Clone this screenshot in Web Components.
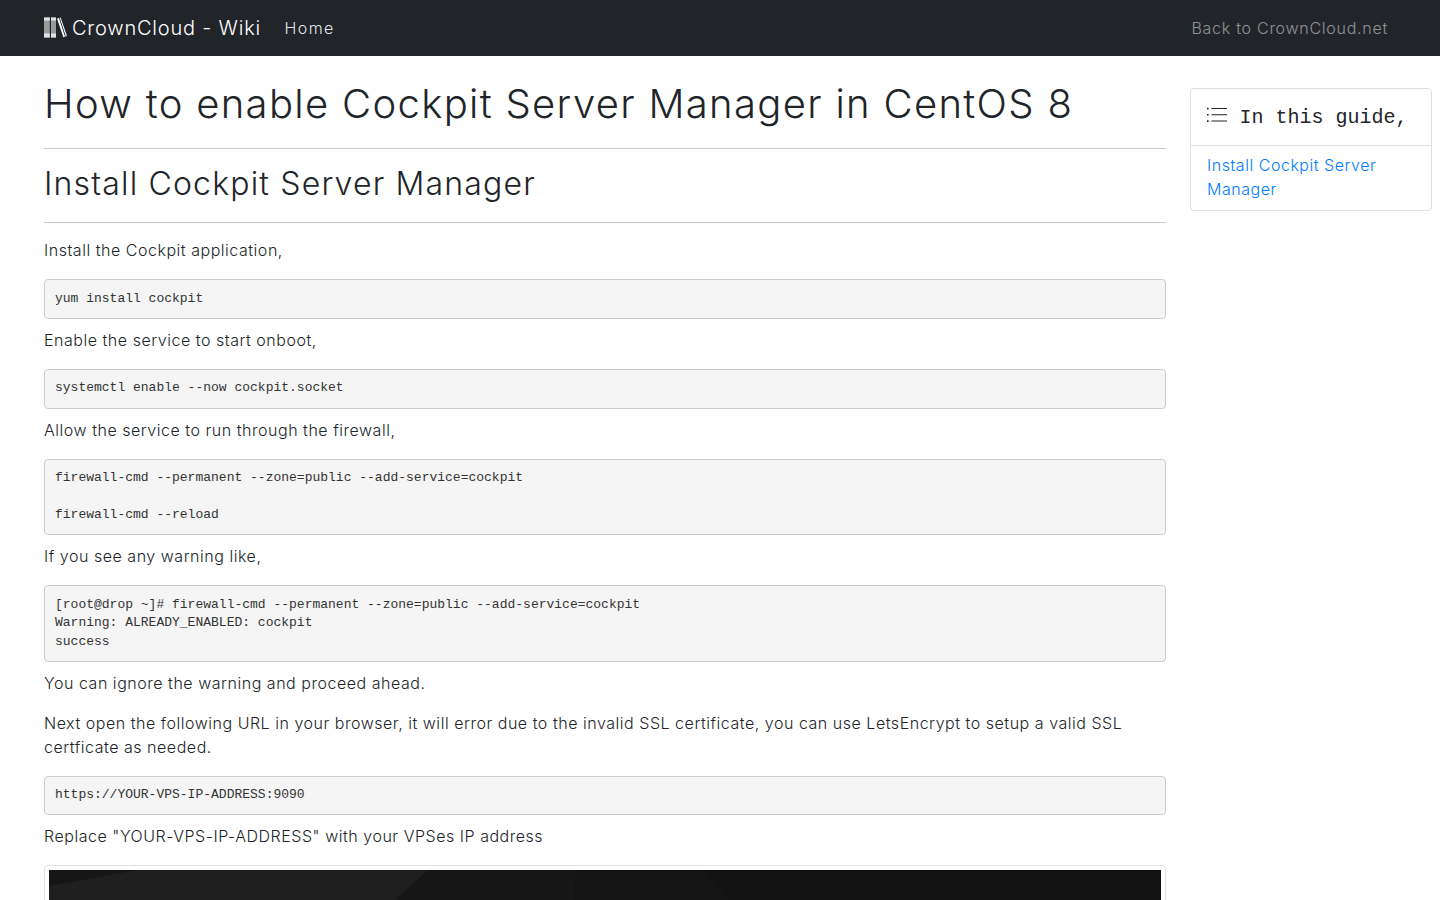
<!DOCTYPE html>
<html lang="en">
<head>
<meta charset="utf-8">
<title>How to enable Cockpit Server Manager in CentOS 8</title>
<style>
  html, body { margin: 0; background: #fff; }
  body {
    font-family: Inter, "Liberation Sans", sans-serif;
    font-size: 16px;
    line-height: 24px;
    color: #212529;
  }
</style>
</head>
<body>
<cc-navbar></cc-navbar>
<cc-page>
  <cc-title level="1">How to enable Cockpit Server Manager in CentOS 8</cc-title>
  <cc-title level="2">Install Cockpit Server Manager</cc-title>
  <cc-para>Install the Cockpit application,</cc-para>
  <cc-code>yum install cockpit</cc-code>
  <cc-para>Enable the service to start onboot,</cc-para>
  <cc-code>systemctl enable --now cockpit.socket</cc-code>
  <cc-para>Allow the service to run through the firewall,</cc-para>
  <cc-code>firewall-cmd --permanent --zone=public --add-service=cockpit

firewall-cmd --reload</cc-code>
  <cc-para>If you see any warning like,</cc-para>
  <cc-code>[root@drop ~]# firewall-cmd --permanent --zone=public --add-service=cockpit
Warning: ALREADY_ENABLED: cockpit
success</cc-code>
  <cc-para>You can ignore the warning and proceed ahead.</cc-para>
  <cc-para>Next open the following URL in your browser, it will error due to the invalid SSL certificate, you can use LetsEncrypt to setup a valid SSL certficate as needed.</cc-para>
  <cc-code>https://YOUR-VPS-IP-ADDRESS:9090</cc-code>
  <cc-para>Replace "YOUR-VPS-IP-ADDRESS" with your VPSes IP address</cc-para>
  <cc-shot></cc-shot>
  <cc-toc slot="aside">
    <a href="#install">Install Cockpit Server Manager</a>
  </cc-toc>
</cc-page>

<script>
class BaseElement extends HTMLElement {
  constructor(html) {
    super();
    const template = document.createElement('template');
    template.innerHTML = html;
    this.attachShadow({ mode: 'open' });
    this.shadowRoot.appendChild(template.content.cloneNode(true));
  }
}

class CcNavbar extends BaseElement {
  constructor() {
    super(`
      <style>
        :host { display: block; }
        nav {
          display: flex;
          align-items: center;
          height: 56px;
          padding: 0 52px 0 44px;
          background: #212529;
        }
        a { text-decoration: none; font-weight: 300; }
        .brand {
          display: flex;
          align-items: center;
          gap: 5px;
          color: #fff;
          font-size: 20px;
          letter-spacing: 0.04em;
        }
        svg { width: 23px; height: 21px; display: block; margin-top: -1px; }
        .home { margin: 0 0 1px 23.5px; color: rgba(255,255,255,.9); letter-spacing: 0.09em; }
        .back { margin: 0 0 1px auto; color: rgba(255,255,255,.5); letter-spacing: 0.046em; }
      </style>
      <nav>
        <a class="brand" href="#">
          <svg viewBox="0 0 23 21">
            <path fill="#9b9b9b" d="M0 .5h5.8v20H0zM7 .5h5v20H7z"/>
            <path fill="#e2e2e2" d="M0 .5h5.8v3H0zM7 .5h5v3H7zM0 16.5h5.8v4H0zM7 16.5h5v4H7z"/>
            <path fill="#fff" d="M13 1.6L16.6.5 23 19 19.3 20.2z"/>
            <path fill="#212529" d="M14.9.9l.8-.2 6.1 18.6-.8.3z"/>
          </svg>
          CrownCloud - Wiki
        </a>
        <a class="home" href="#">Home</a>
        <a class="back" href="#">Back to CrownCloud.net</a>
      </nav>
    `);
  }
}

class CcPage extends BaseElement {
  constructor() {
    super(`
      <style>
        :host {
          display: grid;
          grid-template-columns: minmax(0, 1fr) 242px;
          column-gap: 24px;
          padding: 24px 8px 0 44px;
          font-weight: 350;
          letter-spacing: 0.033em;
        }
        aside { padding-top: 8px; }
      </style>
      <main><slot></slot></main>
      <aside><slot name="aside"></slot></aside>
    `);
  }
}

class CcTitle extends BaseElement {
  constructor() {
    super(`
      <style>
        :host { display: block; }
        .t { font-weight: 350; line-height: 1.2; margin: 0; }
        .l1 { font-size: 40px; padding-bottom: 20px; letter-spacing: 0.033em; }
        .l2 { font-size: 32px; padding: 16px 0 19px; letter-spacing: 0.037em; }
        hr { border: 0; border-top: 1px solid #ccc; margin: 0; }
        :host([level="2"]) hr { margin-bottom: 16px; }
      </style>
      <div class="t" role="heading"><slot></slot></div>
      <hr>
    `);
    this.shadowRoot.querySelector('.t').classList.add('l' + this.getAttribute('level'));
  }
}

class CcPara extends BaseElement {
  constructor() {
    super(`
      <style>
        /* Inter sits a pixel lower in the line box than the original font */
        :host { display: block; margin: -1px 0 17px; }
      </style>
      <slot></slot>
    `);
  }
}

class CcCode extends BaseElement {
  constructor() {
    super(`
      <style>
        :host { display: block; margin-bottom: 10px; }
        pre {
          margin: 0;
          padding: 9.5px 10px;
          font: 13px/1.42857 "Liberation Mono", monospace;
          letter-spacing: 0;
          color: #333;
          background: #f5f5f5;
          border: 1px solid #ccc;
          border-radius: 4px;
          white-space: pre;
        }
      </style>
      <pre><slot></slot></pre>
    `);
  }
}

class CcShot extends BaseElement {
  constructor() {
    super(`
      <style>
        :host {
          display: block;
          padding: 4px;
          border: 1px solid #dee2e6;
          border-radius: 4px;
        }
        svg { display: block; width: 100%; height: 626px; }
      </style>
      <svg viewBox="0 0 1112 626" preserveAspectRatio="none">
        <rect width="1112" height="626" fill="#121212"/>
        <polygon points="0,0 379,0 -300,626 0,626" fill="#1f1f1f"/>
        <polygon points="0,0 88,0 0,16" fill="#161616"/>
        <polygon points="379,0 528,0 460,626 -300,626" fill="#171717"/>
        <polygon points="528,0 654,0 1217,626 460,626" fill="#141414"/>
      </svg>
    `);
  }
}

class CcToc extends BaseElement {
  constructor() {
    super(`
      <style>
        :host {
          display: block;
          border: 1px solid rgba(0,0,0,.125);
          border-radius: 4px;
        }
        header {
          display: flex;
          align-items: center;
          gap: 12.5px;
          height: 56px;
          padding: 0 16px;
          border-bottom: 1px solid rgba(0,0,0,.125);
          font: 20px/24px "Liberation Mono", monospace;
          letter-spacing: 0;
          color: #212529;
        }
        svg { width: 20px; height: 20px; display: block; flex: none; }
        span { margin-top: 2px; }
        .body { padding: 7px 16px 9px; }
        ::slotted(a) { color: #007bff; text-decoration: none; }
      </style>
      <header>
        <svg viewBox="0 0 20 20" fill="#212529">
          <path d="M4.5 1h15.5v1.1H4.5zM4.5 7.2h15.5v1.1H4.5zM4.5 13.5h15.5v1.1H4.5z"/>
          <path d="M0 .7h1.6v1.7H0zM0 6.9h1.6v1.7H0zM0 13.2h1.6v1.7H0z"/>
        </svg>
        <span>In this guide,</span>
      </header>
      <div class="body"><slot></slot></div>
    `);
  }
}

customElements.define('cc-navbar', CcNavbar);
customElements.define('cc-page', CcPage);
customElements.define('cc-title', CcTitle);
customElements.define('cc-para', CcPara);
customElements.define('cc-code', CcCode);
customElements.define('cc-shot', CcShot);
customElements.define('cc-toc', CcToc);
</script>
</body>
</html>
